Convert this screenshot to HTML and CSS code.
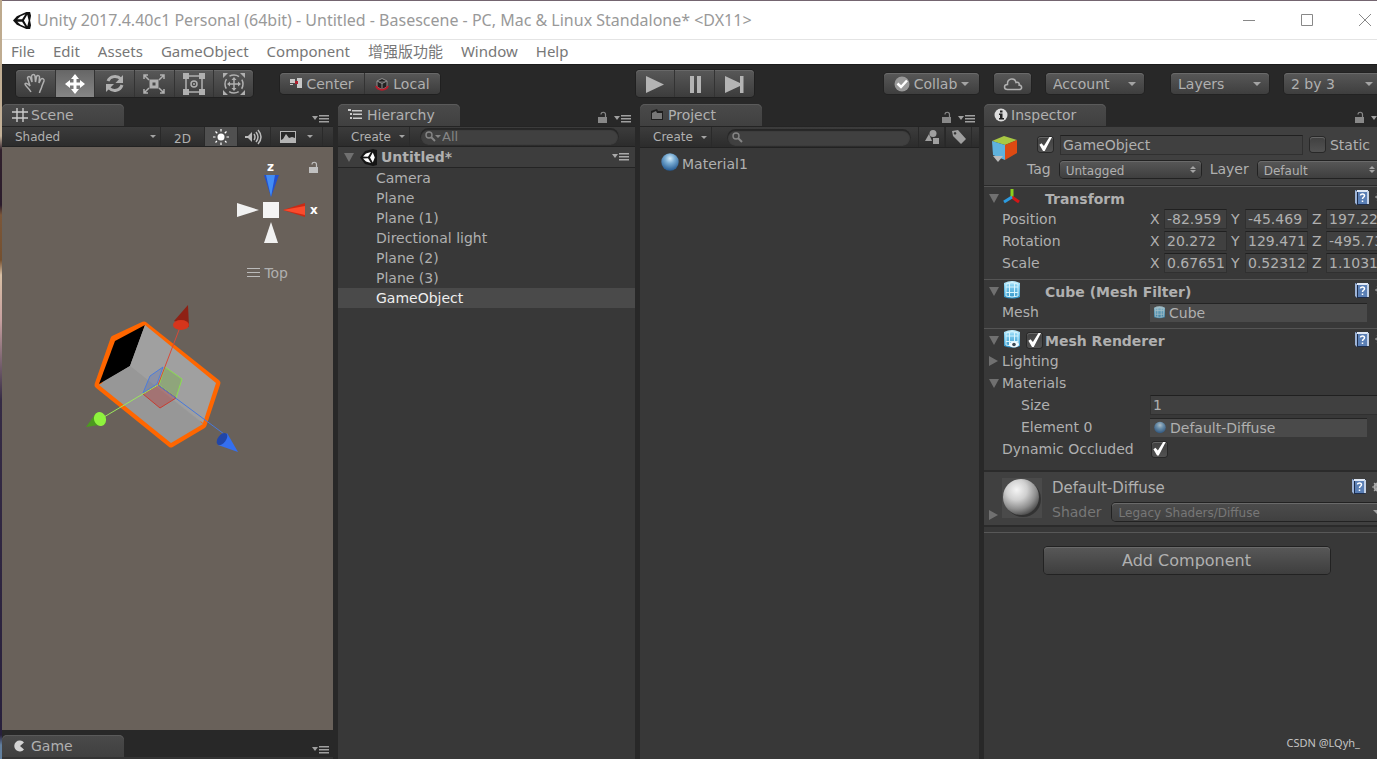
FILE: index.html
```html
<!DOCTYPE html>
<html lang="en">
<head>
<meta charset="utf-8">
<title>Unity 2017.4.40c1 Personal (64bit)</title>
<link rel="stylesheet" href="styles.css">
</head>
<body>
<svg class="defs" aria-hidden="true">
  <defs>
    <symbol id="i-unity" viewBox="0 0 20 20"><path fill-rule="evenodd" d="M0 10 4 5.500 14 1 18 1 19 5 18 10 19 15 18 19 14 19 4 14.500ZM8 5.500 4.500 8.800 9.600 8.800 13 3.500ZM15 4 11.500 10 15 16 16.500 10ZM4.500 11.200 8 14.500 13 16.500 9.600 11.200Z"/></symbol>
    <symbol id="i-lock" viewBox="0 0 10 13"><path d="M0 6H9V12H0Z" fill="currentColor"/><path d="M3 3.500C3 0.500 7.500 0.500 7.500 3.500V6" fill="none" stroke="currentColor" stroke-width="1.200"/></symbol>
    <symbol id="i-menu" viewBox="0 0 18 10"><path d="M0 2H6L3 6ZM7 1H17V2.500H7ZM7 4H17V5.500H7ZM7 7H17V8.500H7Z" fill="currentColor"/></symbol>
    <symbol id="i-search" viewBox="0 0 11 11"><circle cx="4" cy="4" r="3" fill="none" stroke="currentColor" stroke-width="1.400"/><path d="M6 6 10 10" stroke="currentColor" stroke-width="2"/></symbol>
    <symbol id="i-help" viewBox="0 0 16 17"><path d="M1 1H14L15 2V15L13 16H3L1 14Z" fill="#1d2c4a"/><path d="M1 1 3 2V16L1 14Z" fill="#9db4d8"/><path d="M3 1H14V3H3Z" fill="#dfe8f5"/><path d="M13 2H15V15H13Z" fill="#c2d0e6"/><path d="M4 3H13V15H4Z" fill="#5a7fb5"/><path d="M6.500 6.500C6.500 4.500 10.500 4.500 10.500 6.700 10.500 8.300 8.500 8.300 8.500 10M8.500 11.500V13" stroke="#fff" stroke-width="1.500" fill="none"/></symbol>
    <symbol id="i-gear" viewBox="0 0 12 12"><circle cx="6" cy="6" r="3.500" fill="none" stroke="#aaa" stroke-width="2"/><path d="M6 0V12M0 6H12M2 2 10 10M10 2 2 10" stroke="#aaa" stroke-width="1.200"/></symbol>
    <linearGradient id="g-mesh" x2="0" y2="1"><stop offset="0" stop-color="#c9f3ff"/><stop offset=".3" stop-color="#7ccbee"/><stop offset="1" stop-color="#2f92c6"/></linearGradient>
    <symbol id="i-mesh" viewBox="0 0 16 18"><path d="M0 2Q8-2 16 2V16Q8 19 0 16Z" fill="url(#g-mesh)"/><path d="M5.500 2V16M10.500 2V16M2 6H14M2 11.500H14M2 3Q8 0 14 3V15Q8 17 2 15Z" stroke="#d5f4fd" stroke-width="1" fill="none"/></symbol>
    <radialGradient id="g-mat" cx=".5" cy=".3" r=".7"><stop offset="0" stop-color="#d5ecfa"/><stop offset=".4" stop-color="#79acd3"/><stop offset="1" stop-color="#245a92"/></radialGradient>
    <symbol id="i-mat" viewBox="0 0 18 18"><circle cx="9" cy="9" r="8.700" fill="url(#g-mat)"/></symbol>
    <radialGradient id="g-ball" cx=".38" cy=".3" r=".72"><stop offset="0" stop-color="#f5f5f5"/><stop offset=".4" stop-color="#d0d0d0"/><stop offset=".75" stop-color="#8f8f8f"/><stop offset="1" stop-color="#505050"/></radialGradient>
  </defs>
</svg>

<div class="window">
  <header class="titlebar">
    <svg class="logo" width="19" height="19"><use href="#i-unity"/></svg>
    <h1>Unity 2017.4.40c1 Personal (64bit) - Untitled - Basescene - PC, Mac &amp; Linux Standalone* &lt;DX11&gt;</h1>
    <div class="caption">
      <button aria-label="Minimize"><svg width="12" height="12"><path d="M0 6.500H12"/></svg></button>
      <button aria-label="Maximize"><svg width="12" height="12"><path d="M.5.500H11.500V11.500H.5Z"/></svg></button>
      <button aria-label="Close"><svg width="12" height="12"><path d="M0 0 12 12M12 0 0 12"/></svg></button>
    </div>
  </header>
  <nav class="menubar">
    <button>File</button><button>Edit</button><button>Assets</button><button>GameObject</button><button>Component</button><button lang="zh-CN">增强版功能</button><button>Window</button><button>Help</button>
  </nav>

  <div class="toolbar">
    <div class="group tall">
      <button aria-label="Hand"><svg width="24" height="24"><path class="ln" d="M8 20C6 16 2 14 2 12 3 10.500 5 12 7 14L4.500 6C5 4 7 4 7.500 6L9 10 8.500 4C9.500 2 11.500 2 12 4L12.500 10 13.500 4.500C14.500 3 16.500 3.500 16.500 5L16 11 18 7C19.500 6 21.500 7 21 9L19 14C18 18 17 18 16.500 21"/></svg></button>
      <button class="on" aria-label="Move"><svg width="24" height="24"><path fill="#fff" d="M12 2 16 7H13.500V10.500H17V8L22 12 17 16V13.500H13.500V17H16L12 22 8 17H10.500V13.500H7V16L2 12 7 8V10.500H10.500V7H8Z"/></svg></button>
      <button aria-label="Rotate"><svg width="24" height="24"><path fill="none" stroke="#b0b0b0" stroke-width="3" d="M5 9C7 4 14 3 18 7M19 13C17 19 10 20 6 16"/><path fill="#b0b0b0" d="M20 3V11H12.500ZM3 20V12H11Z"/></svg></button>
      <button aria-label="Scale"><svg width="24" height="24"><path class="ln thick" d="M9 9H15V15H9Z"/><path class="ln" d="M2 7V3H6M2 3 7 8M18 3H22V7M22 3 17 8M2 17V21H6M2 21 7 16M18 21H22V17M22 21 17 16"/></svg></button>
      <button aria-label="Rect"><svg width="24" height="24"><path class="ln" d="M4 4H20V20H4Z"/><path fill="#b0b0b0" d="M1 1H7V7H1ZM17 1H23V7H17ZM1 17H7V23H1ZM17 17H23V23H17Z"/><circle class="ln" cx="12" cy="12" r="3"/><circle cx="12" cy="12" r="1" fill="#b0b0b0"/></svg></button>
      <button aria-label="Transform"><svg width="24" height="24"><circle class="ln" cx="12" cy="12" r="9" stroke-dasharray="10 4.140" stroke-dashoffset="5"/><path class="ln" d="M12 7V17M7 12H17"/><path fill="#b0b0b0" d="M1 1H6L1 6ZM23 1V6L18 1ZM1 23V18L6 23ZM23 23H18L23 18ZM12 5 14.500 8H9.500ZM12 19 14.500 16H9.500ZM5 12 8 9.500V14.500ZM19 12 16 9.500V14.500Z"/></svg></button>
    </div>
    <div class="group pivot">
      <button><svg width="12" height="11"><path fill="#c8c8c8" d="M0 1H5V5H0ZM7 0H12V10H7ZM0 6H3V7H0Z"/><path fill="#b02030" d="M5 3H8V6H5Z"/></svg>Center</button>
      <button><svg width="14" height="14"><path d="M2 4 7 1.500 12 4V10L7 12.500 2 10ZM2 4 7 6.500 12 4M7 6.500V12" fill="#222" stroke="#909090"/><path d="M1 9C3 14 11 14 13 9" fill="none" stroke="#b91c2c" stroke-width="2"/></svg>Local</button>
    </div>
    <span class="grow3"></span>
    <div class="group tall play">
      <button aria-label="Play"><svg width="24" height="24"><path fill="#b4b4b4" d="M3 4 21 12.500 3 21Z"/></svg></button>
      <button aria-label="Pause"><svg width="24" height="24"><path fill="#b4b4b4" d="M7 4H11V21H7ZM14 4H18V21H14Z"/></svg></button>
      <button aria-label="Step"><svg width="24" height="24"><path fill="#b4b4b4" d="M3 4 18 11V4H21.500V21H18V14L3 21Z"/></svg></button>
    </div>
    <span class="grow2"></span>
    <button class="btn collab"><svg width="16" height="16"><circle cx="8" cy="8" r="7.500" fill="#999"/><path d="M3.500 7.500 7 11 13 4.500" fill="none" stroke="#fff" stroke-width="2.500"/></svg>Collab<i class="tri"></i></button>
    <button class="btn cloud" aria-label="Services"><svg width="20" height="14"><path class="ln" d="M4.500 12.500C.5 12.500.5 7.500 4.500 7.500 4 1 12 0 13 5.500 16 4.500 16.500 7 16 8 19.500 8.500 19.500 12.500 16 12.500Z"/></svg></button>
    <span class="drop account"><select aria-label="Account"><option>Account</option></select></span>
    <span class="drop layers"><select aria-label="Layers"><option>Layers</option></select></span>
    <span class="drop layout"><select aria-label="Layout"><option>2 by 3</option></select></span>
  </div>

  <main class="panels">
    <section class="leftcol">
      <div class="tabs"><button class="tab"><svg width="16" height="16"><path d="M5 1V15M11 1V15M0 5H16M0 11H16" stroke="#ccc" stroke-width="1.400"/></svg>Scene</button><svg class="tabmenu" width="18" height="10"><use href="#i-menu"/></svg></div>
      <div class="bar scenebar">
        <span class="drop flat shaded"><select aria-label="Draw mode"><option>Shaded</option></select></span>
        <button class="two">2D</button>
        <button class="on" aria-label="Lighting"><svg width="16" height="16"><circle cx="8" cy="8" r="3.500" fill="#fff"/><path d="M8 0V16M0 8H16M2.500 2.500 13.500 13.500M13.500 2.500 2.500 13.500" stroke="#fff" stroke-width="1.200" stroke-dasharray="2.500 11 2.500"/></svg></button>
        <button aria-label="Audio"><svg width="18" height="16"><path fill="#bbb" d="M0 7H3L7 3V13L3 9H0Z"/><path fill="none" stroke="#bbb" stroke-width="1.500" d="M9 5Q11 8 9 11M11 3Q15 8 11 13M13 1Q19 8 13 15"/></svg></button>
        <button class="fx" aria-label="Effects"><svg width="16" height="12"><path fill="#b4b4b4" d="M0 0H16V12H0Z"/><path fill="#282828" d="M1 1H15V7L12 6 9 7 6 3 3 8 1 9Z" /></svg><i class="tri"></i></button>
      </div>
      <div class="viewport">
        <svg class="object" aria-label="Selected cube">
          <path d="M142 178 112 192 96 238 169 297 201 278 215 236Z" fill="#9b9b9b" stroke="#ff6600" stroke-width="7" stroke-linejoin="round"/>
          <path d="M143 178 128 219 97 237 113 194Z" fill="#000"/>
          <path d="M143 178 214 236 201 276 128 219Z" fill="#a0a0a0"/>
          <path d="M97 238 128 219 201 277 169 296Z" fill="#979797"/>
          <path d="M155 237 161 220 148 229 141 246Z" fill="#6678b066" stroke="#4c7ddd"/>
          <path d="M157 238 163 220 180 232 174 251Z" fill="#78aa4a70" stroke="#8adf50"/>
          <path d="M156 238 174 251 158 261 141 247Z" fill="#b8383860" stroke="#c83c30"/>
          <path d="M156 238 180 175" stroke="#d84a38"/>
          <path d="M156 238 102 270" stroke="#9be85c"/>
          <path d="M156 238 222 287" stroke="#4779dc"/>
        </svg>
        <svg class="handles" width="160" height="160" aria-hidden="true">
          <path d="M102 11 88 27 103 33Z" fill="#8f2114"/><ellipse cx="95" cy="31" rx="8" ry="5" fill="#d7351c"/>
          <path d="M0 133 10 119 20 130Z" fill="#4c9a20"/><ellipse cx="14" cy="125" rx="6" ry="7" transform="rotate(-18 14 125)" fill="#8ff23e"/>
          <path d="M152 158 132 151 141 139Z" fill="#346ff0"/><ellipse cx="136" cy="145" rx="4" ry="7" transform="rotate(38 136 145)" fill="#2146a8"/>
        </svg>
        <svg class="axis" width="90" height="90">
          <path d="M28 27H43L35 49Z" fill="#2450cc"/><path d="M30 27H39L35 49Z" fill="#438df5"/>
          <path d="M1 55 23 62 1 69Z" fill="#f1f1f1"/>
          <path d="M28 95 35 74 42 95Z" fill="#f1f1f1"/>
          <path d="M69 55V69L47 62Z" fill="#c92a15"/><path d="M69 58V67L47 62Z" fill="#fa4b2d"/>
          <path d="M27 54H43V70H27Z" fill="#f4f4f4"/>
          <text x="31" y="23">z</text><text x="74" y="66">x</text>
        </svg>
        <svg class="vlock" width="10" height="13"><use href="#i-lock"/></svg>
        <button class="top"><svg width="13" height="10"><path d="M0 .5H13M0 4.500H13M0 8.500H13" stroke="#bbb"/></svg>Top</button>
      </div>
      <div class="tabs lower"><button class="tab"><svg width="16" height="12"><path d="M10 2.500A5.500 5.500 0 1 0 10 9.500L6 6Z" fill="#d4d4d4" transform="translate(2 0)"/></svg>Game</button><svg class="tabmenu" width="18" height="10"><use href="#i-menu"/></svg></div>
      <div class="gamebar"></div>
    </section>

    <section class="panel">
      <div class="tabs"><button class="tab"><svg width="16" height="12"><path d="M0 0H3V2H0ZM4 1H14V2.500H4ZM2 4H4V6H2ZM5 4.500H14V6H5ZM2 8H4V10H2ZM5 8.500H14V10H5Z" fill="#ccc"/></svg>Hierarchy</button><svg class="tablock" width="10" height="13"><use href="#i-lock"/></svg><svg class="tabmenu" width="18" height="10"><use href="#i-menu"/></svg></div>
      <div class="bar"><button class="create">Create<i class="tri"></i></button>
        <label class="search hs"><svg width="11" height="11"><use href="#i-search"/></svg><i class="tri"></i><input type="text" placeholder="All" aria-label="Search hierarchy"></label></div>
      <div class="scenerow"><i class="fold"></i><svg width="17" height="17" viewBox="0 0 17 17"><path fill="#151515" d="M0 8.500 5 2 13 0 17 1V16L13 17 5 15Z"/><path fill="#fff" d="M6 4.500 3 7.500 8 7.800 11 3ZM12.800 3.500 10 8.500 12.800 13.500 14.800 8.500ZM3 9.500 6 12.500 11 14 8 9.200Z"/></svg><b>Untitled*</b><svg class="rowmenu" width="18" height="10"><use href="#i-menu"/></svg></div>
      <ul class="tree"><li>Camera</li><li>Plane</li><li>Plane (1)</li><li>Directional light</li><li>Plane (2)</li><li>Plane (3)</li><li class="sel">GameObject</li></ul>
    </section>

    <section class="panel">
      <div class="tabs"><button class="tab"><svg width="15" height="12"><path d="M1 2 7 0 8 2H13V11H1Z" fill="#1e1e1e"/><path d="M2 4 6 2 7 4H12V10H2Z" fill="#777"/></svg>Project</button><svg class="tablock" width="10" height="13"><use href="#i-lock"/></svg><svg class="tabmenu" width="18" height="10"><use href="#i-menu"/></svg></div>
      <div class="bar pbar"><button class="create">Create<i class="tri"></i></button>
        <label class="search ps"><svg width="11" height="11"><use href="#i-search"/></svg><input type="text" aria-label="Search project"></label>
        <button class="filter" aria-label="Filter by type"><svg width="14" height="14"><circle cx="8" cy="3.500" r="3.500" fill="#a0a0a0"/><path d="M0 11 4 4 7 11ZM8 8H14V14H8Z" fill="#a0a0a0"/></svg></button>
        <button class="filter" aria-label="Filter by label"><svg width="14" height="14"><path fill-rule="evenodd" fill="#a0a0a0" d="M0 1 6 0 14 9 9 14 1 6ZM3 2A1.300 1.300 0 1 0 3.100 2Z"/></svg></button></div>
      <ul class="assets"><li><svg width="18" height="18"><use href="#i-mat"/></svg>Material1</li></ul>
    </section>

    <section class="panel inspector">
      <div class="wide">
        <div class="tabs"><button class="tab"><svg width="14" height="14"><circle cx="7" cy="7" r="6.500" fill="#ddd"/><path d="M6 2.500H8.500V4.500H6ZM5 5.500H8.500V10H10V11.500H5V10H6V7H5Z" fill="#222"/></svg>Inspector</button><svg class="tablock" width="10" height="13"><use href="#i-lock"/></svg><svg class="tabmenu" width="18" height="10"><use href="#i-menu"/></svg></div>
        <div class="objhead">
          <svg class="cube" width="27" height="27"><path d="M1 6 13 1 26 5 14 10Z" fill="#a8c843"/><path d="M1 6 14 10V25L2 20Z" fill="#5fb2dd"/><path d="M14 10 26 5V18L14 25Z" fill="#dd4a12"/><path d="M2 21H12L7 27Z" fill="#bbb"/></svg>
          <div class="objrows">
            <div class="objrow one"><input type="checkbox" checked aria-label="Active"><input class="field name" type="text" value="GameObject" aria-label="Name"><input type="checkbox" id="static"><label for="static">Static</label><i class="tri"></i></div>
            <div class="objrow two"><label for="tag">Tag</label><span class="drop updown tag"><select id="tag"><option>Untagged</option></select></span><label for="layer">Layer</label><span class="drop updown lay"><select id="layer"><option>Default</option></select></span></div>
          </div>
        </div>

        <div class="comp">
          <div class="chead"><i class="fold"></i><svg width="18" height="18"><path d="M9 9V1" stroke="#8ccf1c" stroke-width="3"/><path d="M9 9 16 14" stroke="#d41616" stroke-width="3"/><path d="M9 9 1 14" stroke="#2c9be0" stroke-width="3"/></svg><h2>Transform</h2><span class="tools"><svg width="16" height="17"><use href="#i-help"/></svg><svg width="12" height="12"><use href="#i-gear"/></svg></span></div>
          <div class="prop"><span>Position</span><div class="xyz"><label for="px">X</label><input class="field" id="px" value="-82.959"><label for="py">Y</label><input class="field" id="py" value="-45.469"><label for="pz">Z</label><input class="field" id="pz" value="197.224"></div></div>
          <div class="prop"><span>Rotation</span><div class="xyz"><label for="rx">X</label><input class="field" id="rx" value="20.272"><label for="ry">Y</label><input class="field" id="ry" value="129.471"><label for="rz">Z</label><input class="field" id="rz" value="-495.73"></div></div>
          <div class="prop"><span>Scale</span><div class="xyz"><label for="sx">X</label><input class="field" id="sx" value="0.67651"><label for="sy">Y</label><input class="field" id="sy" value="0.52312"><label for="sz">Z</label><input class="field" id="sz" value="1.10311"></div></div>
        </div>

        <div class="comp">
          <div class="chead"><i class="fold"></i><svg width="16" height="18"><use href="#i-mesh"/></svg><h2>Cube (Mesh Filter)</h2><span class="tools"><svg width="16" height="17"><use href="#i-help"/></svg><svg width="12" height="12"><use href="#i-gear"/></svg></span></div>
          <div class="prop"><span>Mesh</span><button class="obj"><svg class="dim" width="11" height="13"><use href="#i-mesh"/></svg>Cube</button></div>
        </div>

        <div class="comp renderer">
          <div class="chead"><i class="fold"></i><svg width="16" height="18"><use href="#i-mesh"/><ellipse cx="11" cy="14.500" rx="5" ry="3" fill="#f0faff"/><circle cx="11" cy="14.500" r="1.800" fill="#3a4a55"/></svg><input type="checkbox" checked aria-label="Mesh Renderer enabled"><h2>Mesh Renderer</h2><span class="tools"><svg width="16" height="17"><use href="#i-help"/></svg><svg width="12" height="12"><use href="#i-gear"/></svg></span></div>
          <div class="prop"><span class="folder"><i class="fold shut"></i>Lighting</span></div>
          <div class="prop"><span class="folder"><i class="fold"></i>Materials</span></div>
          <div class="prop"><label class="sub" for="size">Size</label><input class="field" id="size" value="1"></div>
          <div class="prop"><span class="sub">Element 0</span><button class="obj"><svg class="dim" width="12" height="13"><use href="#i-mat"/></svg>Default-Diffuse</button></div>
          <div class="prop"><label for="dyn">Dynamic Occluded</label><input type="checkbox" id="dyn" checked></div>
        </div>

        <div class="material">
          <i class="fold shut"></i>
          <svg class="preview" width="40" height="40"><rect width="40" height="40" fill="#4a4a4a"/><circle cx="21" cy="21" r="18" fill="#323232"/><circle cx="19" cy="19" r="18" fill="url(#g-ball)"/></svg>
          <div class="mbody">
            <div class="mtitle">Default-Diffuse<span class="tools"><svg width="16" height="17"><use href="#i-help"/></svg><svg width="12" height="12"><use href="#i-gear"/></svg></span></div>
            <div class="mshader"><label for="shader">Shader</label><span class="drop"><select id="shader" disabled><option>Legacy Shaders/Diffuse</option></select></span></div>
          </div>
        </div>
        <div class="rule"></div>
        <button class="btn add">Add Component</button>
      </div>
    </section>
  </main>
  <div class="watermark">CSDN @LQyh_</div>
</div>
</body>
</html>
```
FILE: styles.css
```css
* { box-sizing: border-box; }
body {
  margin: 0;
  height: 100vh;
  overflow: hidden;
  padding: 1px 0 0 2px;
  background: linear-gradient(#bda98c 0, #c3b198 136px, #30202c 150px, #2b1c2c 205px, #7b573a 215px, #75502f 260px, #d9c0a5 275px, #c7a0a0 320px, #352b45 400px, #28203c 735px, #62809f 745px);
  font: 14px/20px "DejaVu Sans", "Noto Sans CJK SC", sans-serif;
  color: #b0b0b0;
}
button, input, select { font: inherit; color: inherit; border: 0; margin: 0; padding: 0; background: none; border-radius: 0; }
h1, h2, ul { margin: 0; padding: 0; list-style: none; font: inherit; }
svg { flex: none; display: block; }
.defs { position: absolute; width: 0; height: 0; }
.ln { fill: none; stroke: #b0b0b0; stroke-width: 1.5; }
.ln.thick { stroke-width: 3; }
.window { height: 100%; display: flex; flex-direction: column; background: #282828; box-shadow: 0 -1px #746570; overflow: hidden; position: relative; }

/* Title and menu */
.titlebar { flex: none; height: 39px; display: flex; align-items: center; background: #fff; border-bottom: 1px solid #e4e4e4; color: #999; padding: 0 6px 0 11px; gap: 5px; }
.titlebar h1 { font: 16px/24px "Noto Sans", "Noto Sans CJK SC", sans-serif; flex: 1; white-space: nowrap; }
.logo { fill: #111; }
.caption { display: flex; gap: 46px; }
.caption button { width: 12px; height: 12px; }
.caption path { stroke: #888; fill: none; }
.menubar { flex: none; height: 24px; display: flex; align-items: center; gap: 18px; background: #fff; padding: 0 0 2px 9px; color: #777; }
.menubar button { font: 15px/22px "Noto Sans", "Noto Sans CJK SC", sans-serif; white-space: nowrap; }

/* Main toolbar */
.toolbar { flex: none; height: 40px; display: flex; align-items: center; padding: 0 0 2px 14px; border-top: 1px solid #1c1c1c; }
.group { display: flex; height: 21px; border-radius: 4px; overflow: hidden; background: linear-gradient(#585858, #3c3c3c); box-shadow: 0 0 0 1px #202020, inset 0 1px #686868; }
.group.tall { height: 27px; }
.group button { display: flex; align-items: center; justify-content: center; gap: 4px; flex: 1 1 auto; border-left: 1px solid #333; }
.group button:first-child { border-left: 0; }
.group .on { background: linear-gradient(#666, #868686); }
.tall { width: 237px; }
.pivot { width: 160px; margin-left: 27px; }
.play { width: 118px; }
.grow3 { flex: 3; }
.grow2 { flex: 2; }
.btn, .drop { position: relative; border-radius: 4px; background: linear-gradient(#585858, #3e3e3e); box-shadow: 0 0 0 1px #222, inset 0 1px #6a6a6a; }
.btn { display: flex; align-items: center; justify-content: center; gap: 4px; height: 21px; }
.tri { flex: none; width: 0; height: 0; border: 4px solid transparent; border-top-color: #a4a4a4; border-bottom: 0; }
.collab { width: 95px; }
.cloud { width: 37px; margin: 0 15px; }
.drop { display: block; height: 21px; }
.drop::after { content: ""; position: absolute; right: 8px; top: 50%; margin-top: -2px; border: 4px solid transparent; border-top-color: #a4a4a4; border-bottom: 0; pointer-events: none; }
.drop select { appearance: none; display: block; width: 100%; height: 100%; padding-left: 7px; }
.drop option { color: #111; }
.account, .layers { width: 98px; }
.layers { margin: 0 15px 0 27px; }
.layout { width: 97px; margin-right: -4px; }

/* Docked panels */
.panels { flex: 1; min-height: 0; display: grid; grid-template-columns: 331fr 297fr 339fr 393fr; gap: 5px; }
.panels > section { min-width: 0; min-height: 0; display: flex; flex-direction: column; }
.panel { background: #383838; }
.tabs { flex: none; display: flex; align-items: center; height: 22px; background: #282828; padding-right: 3px; }
.tab { width: 122px; height: 22px; display: flex; align-items: center; gap: 3px; padding: 0 0 0 10px; border-radius: 5px 5px 0 0; background: linear-gradient(#4a4a4a, #404040); box-shadow: inset 0 1px #5a5a5a; }
.tabmenu { margin: 7px 0 0 6px; color: #a0a0a0; }
.tabs > .tabmenu:nth-child(2), .tablock { margin-left: auto; }
.tablock { margin-top: 5px; color: #888; }
.bar { flex: none; height: 21px; display: flex; align-items: center; border-top: 1px solid #242424; border-bottom: 1px solid #222; background: linear-gradient(#3c3c3c, #2c2c2c); font-size: 12px; }
.pbar { height: 22px; }
.bar button { height: 100%; display: flex; align-items: center; justify-content: center; border-right: 1px solid #2a2a2a; flex: none; }
.bar .tri { border-width: 3px; border-bottom: 0; }
.scenebar { overflow: hidden; line-height: 18px; }
.drop.flat { background: none; box-shadow: none; width: 153px; height: 19px; margin-left: 6px; border-right: 1px solid #292929; border-radius: 0; }
.flat::after { right: 4px; border-width: 3px; border-bottom: 0; }
.scenebar .two { width: 44px; }
.scenebar button { width: 33px; }
.scenebar .on { background: #505050; }
.scenebar .fx { width: 52px; gap: 11px; }
.create { width: 72px; padding-left: 9px; gap: 8px; }
.search { display: flex; align-items: center; gap: 1px; flex: 1; min-width: 0; height: 17px; border-radius: 9px; background: #404040; box-shadow: inset 0 1px 1px 1px #262626; color: #858585; padding-left: 5px; font-size: 13px; }
.search input { flex: 1; min-width: 0; height: 17px; outline: 0; }
.search input::placeholder { color: #858585; }
.hs { margin: 0 16px 0 10px; }
.hs .tri { border-width: 3px; border-bottom: 0; border-top-color: #858585; margin-left: -2px; }
.ps { margin: 0 7px 0 15px; }
.filter { width: 27px; border-left: 1px solid #282828; }
.filter:last-child { margin-right: 7px; }

/* Scene view */
.viewport { flex: 1; min-height: 0; position: relative; overflow: hidden; background: #69615a; }
.object { position: absolute; left: 0; top: 0; width: 260px; height: 330px; }
.handles { position: absolute; left: 84px; top: 147px; }
.axis { position: absolute; right: 7px; top: 1px; overflow: visible; }
.axis text { font: bold 12px "DejaVu Sans", sans-serif; fill: #fff; }
.vlock { position: absolute; right: 14px; top: 14px; color: #c0c0c0; }
.top { position: absolute; right: 45px; top: 116px; display: flex; align-items: center; gap: 4px; }
.lower { margin-top: 5px; }
.gamebar { flex: none; height: 2px; background: #343434; }

/* Hierarchy and project */
.fold { flex: none; width: 0; height: 0; border: 5px solid transparent; border-top: 9px solid #707070; border-bottom: 0; }
.fold.shut { border: 5px solid transparent; border-left: 9px solid #707070; border-right: 0; }
.scenerow { flex: none; height: 21px; display: flex; align-items: center; padding: 0 3px 0 6px; background: #3d3d3d; border-bottom: 1px solid #242424; }
.scenerow svg { margin: 0 4px 0 6px; }
.scenerow .rowmenu { margin: 0 2px 0 auto; color: #aaa; }
.tree li { padding-left: 38px; }
.tree .sel { background: #4a4a4a; color: #eee; }
.assets { padding: 5px 0 0 21px; }
.assets li { display: flex; align-items: center; gap: 3px; }
.assets svg { margin-bottom: 3px; }

/* Inspector: contents run past the right edge of the window */
.inspector { overflow: hidden; }
.wide { width: calc(100% + 12px); }
.wide .tabs { padding-right: 0; }
.field { height: 20px; min-width: 0; width: 100%; padding: 0 2px; background: #404040; border: 1px solid #303030; border-top-color: #202020; outline: 0; }
input[type=checkbox] { appearance: none; flex: none; width: 15px; height: 15px; border-radius: 3px; background: linear-gradient(#404040, #525252); box-shadow: 0 0 0 1px #282828, inset 0 1px #666; }
input[type=checkbox]:checked::after { content: ""; display: block; width: 14px; height: 14px; background: #fff; clip-path: polygon(10% 55%, 25% 45%, 42% 65%, 82% 0, 100% 0, 48% 100%, 36% 100%); }
.objhead { display: flex; padding: 8px 0 6px 7px; background: #404040; border-top: 1px solid #292929; border-bottom: 1px solid #2a2a2a; }
.objrows { flex: 1; min-width: 0; }
.objrow { display: flex; align-items: center; }
.one { height: 19px; padding: 0 4px 0 20px; gap: 7px; }
.one .name { flex: 1; }
.one label { margin-left: -2px; }
.two { height: 25px; padding: 5px 9px 0 9px; gap: 9px; }
.two .drop { height: 17px; font-size: 12px; }
.two .tag { width: 141px; }
.two .lay { flex: 1; }
.two .drop select { padding-left: 6px; }
.updown::after { right: 5px; margin-top: 1px; border-width: 3px; border-bottom: 0; }
.updown::before { content: ""; position: absolute; right: 5px; top: 5px; border: 3px solid transparent; border-bottom-color: #a4a4a4; border-top: 0; pointer-events: none; }
.comp { padding: 0 0 5px 5px; border-top: 1px solid #545454; }
.chead { display: flex; align-items: center; height: 21px; padding-top: 2px; }
.chead > svg { margin: -3px 0 0 4px; width: 18px; }
.chead h2 { font-weight: bold; margin-left: 24px; }
.chead input + h2 { margin-left: 3px; }
.chead input { margin-left: 6px; }
.tools { margin-left: auto; display: flex; align-items: center; gap: 5px; padding: 0 2px 3px 0; }
.prop { display: grid; grid-template-columns: 148px minmax(0, 1fr); align-items: center; height: 22px; padding-left: 13px; }
.xyz { display: grid; grid-template-columns: 10px 1fr 10px 1fr 10px 1fr; gap: 4px; align-items: center; }
.sub { padding-left: 19px; }
.folder { display: flex; align-items: center; gap: 3px; margin-left: -13px; }
.folder .fold.shut { margin-right: 1px; }
.obj { height: 19px; display: flex; align-items: center; gap: 4px; padding: 0 4px; margin-right: 22px; background: #4a4a4a; border-top: 1px solid #242424; }
.dim { opacity: .7; }
.renderer { padding-bottom: 10px; }
.prop input[type=checkbox] { margin-left: 2px; }
.material { display: flex; height: 57px; padding: 6px 0 0 5px; background: #404040; border-top: 2px solid #2b2b2b; border-bottom: 2px solid #2b2b2b; }
.material > .fold { margin: 32px 4px 0 0; }
.mbody { flex: 1; min-width: 0; padding-left: 10px; }
.mtitle { display: flex; align-items: center; font-size: 15px; }
.mtitle .tools { padding-right: 5px; }
.mshader { display: flex; align-items: center; gap: 10px; height: 24px; padding-top: 4px; color: #777; }
.mshader .drop { flex: 1; height: 18px; font-size: 12px; background: linear-gradient(#4c4c4c, #404040); }
.mshader select { opacity: 1; }
.rule { height: 6px; border-bottom: 1px solid #585858; }
.add { width: 286px; height: 27px; margin: 14px auto 0; font-size: 16px; }

.watermark { position: absolute; right: 17px; bottom: 6px; font: 11px/20px "Noto Sans", sans-serif; color: #c4c4c4; }
```
